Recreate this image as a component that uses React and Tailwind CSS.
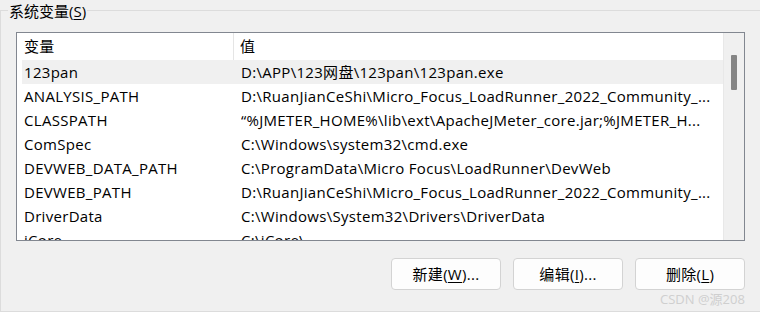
const rows = [
  ["123pan", "D:\\APP\\123网盘\\123pan\\123pan.exe"],
  ["ANALYSIS_PATH", "D:\\RuanJianCeShi\\Micro_Focus_LoadRunner_2022_Community_..."],
  ["CLASSPATH", "“%JMETER_HOME%\\lib\\ext\\ApacheJMeter_core.jar;%JMETER_H..."],
  ["ComSpec", "C:\\Windows\\system32\\cmd.exe"],
  ["DEVWEB_DATA_PATH", "C:\\ProgramData\\Micro Focus\\LoadRunner\\DevWeb"],
  ["DEVWEB_PATH", "D:\\RuanJianCeShi\\Micro_Focus_LoadRunner_2022_Community_..."],
  ["DriverData", "C:\\Windows\\System32\\Drivers\\DriverData"],
  ["iCore", "C:\\iCore\\"],
];

function Button({ label, hotkey, dots }) {
  return (
    <button className="w-[110px] h-[32px] bg-[#fdfdfd] border border-[#d3d3d3] rounded-[4px] text-[15px] tracking-[0.3px] text-black">
      {label}(<span className="underline underline-offset-2">{hotkey}</span>){dots ? "..." : ""}
    </button>
  );
}

export default function App() {
  return (
    <div
      className="relative w-[760px] h-[312px] overflow-hidden bg-[#f0f0f0] text-black"
      style={{ fontFamily: '"Open Sans", "Noto Sans CJK SC", sans-serif' }}
    >
      <div className="pt-[10px]">
        <div className="w-[800px] h-[302px] border-t border-l border-b border-[#dcdcdc]">
          {/* group title */}
          <div className="-mt-[11px] ml-[7px] w-fit bg-[#f0f0f0] px-[1px] text-[15px] leading-[22px]">
            系统变量(<span className="underline underline-offset-2">S</span>)
          </div>

          {/* list view */}
          <div className="ml-[15px] mt-[10px] w-[729px] h-[209px] border border-[#828790] bg-white flex overflow-hidden">
            <div className="flex-1 min-w-0 flex flex-col text-[15px] tracking-[0.3px]">
              <div className="h-[27px] flex items-center shrink-0">
                <div className="w-[217px] h-full flex items-center pl-[7px] border-r border-[#e5e5e5]">变量</div>
                <div className="pl-[6px] flex-1 h-full flex items-center">值</div>
              </div>
              {rows.map(([name, value], i) => (
                <div
                  key={name}
                  className={`ml-[5px] h-[24px] shrink-0 flex items-center ${i === 0 ? "bg-[#f0f0f0]" : ""}`}
                >
                  <div className="w-[219px] pl-[2px] whitespace-nowrap">{name}</div>
                  <div className="flex-1 min-w-0 whitespace-nowrap overflow-hidden">{value}</div>
                </div>
              ))}
            </div>
            {/* scrollbar */}
            <div className="w-[21px] h-full bg-[#f0f0f0] border-l border-[#e8e8e8] pt-[22px] flex justify-center shrink-0">
              <div className="w-[6px] h-[35px] bg-[#858585] rounded-[1px]" />
            </div>
          </div>

          <div className="flex gap-[12px] ml-[390px] mt-[17px]">
            <Button label="新建" hotkey="W" dots />
            <Button label="编辑" hotkey="I" dots />
            <Button label="删除" hotkey="L" />
          </div>
        </div>
      </div>

      <div className="absolute left-[660px] top-[291px] text-[13px] text-[#cfcfcf] leading-[16px]">
        CSDN @源208
      </div>
    </div>
  );
}
